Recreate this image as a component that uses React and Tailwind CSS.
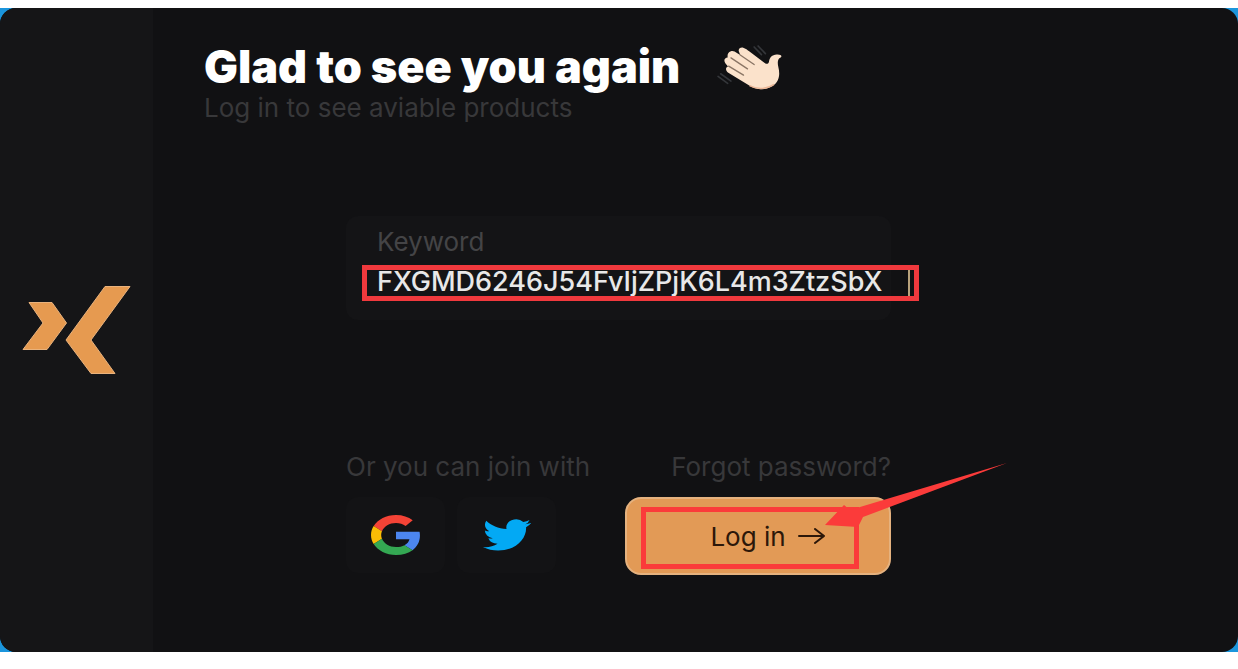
import React, { useState } from 'react';

const Logo = () => (
  <svg className="w-[109px] h-[88px]" viewBox="23 286 109 88" fill="#e69a50" stroke="#e9b27c" strokeWidth="1" aria-label="Logo" role="img">
    <path d="M30 302.5H53L67.5 323L48 349.5H24L44 323Z" />
    <path d="M106 286.5H131L92 340L116 373.5H92L67 340Z" />
  </svg>
);

const WavingHand = () => (
  <svg className="w-[67px] h-[47px] shrink-0" viewBox="650 45 200 142" aria-hidden="true">
    <path
      d="M694 67C700 65 706 68 712 72L722 78L718 68C715 60 722 54 731 56C738 58 744 63 750 68L798 104C804 107 808 103 809 98C811 86 818 78 832 77C844 76 850 81 844 86C835 90 834 100 837 114C843 138 840 158 820 172C798 186 770 185 748 170L686 132C678 127 676 116 685 113L677 103C671 95 675 86 684 86C683 78 684 70 694 67Z"
      fill="#fbe2cb"
    />
    <path d="M722 78L764 107M694 87L744 120M687 112L732 139" fill="none" stroke="#8a7565" strokeWidth="4" strokeLinecap="round" />
    <path d="M750 171C776 185 806 180 824 167" fill="none" stroke="#eab595" strokeWidth="4" />
    <path d="M764 54L786 77M776 51L798 74M655 143L684 164M663 135L694 157" fill="none" stroke="#34363a" strokeWidth="5" strokeLinecap="round" />
  </svg>
);

const GoogleIcon = () => (
  <svg className="w-[50px] h-10" viewBox="0 0 48 48" preserveAspectRatio="none" aria-hidden="true">
    <path fill="#f44336" d="M24 9.5c3.54 0 6.71 1.22 9.21 3.6l6.85-6.85C35.9 2.38 30.47 0 24 0 14.62 0 6.51 5.38 2.56 13.22l7.98 6.19C12.43 13.72 17.74 9.5 24 9.5z" />
    <path fill="#4c86f0" d="M46.98 24.55c0-1.57-.15-3.09-.38-4.55H24v9.02h12.94c-.58 2.96-2.26 5.48-4.78 7.18l7.73 6c4.51-4.18 7.09-10.36 7.09-17.65z" />
    <path fill="#fbbc05" d="M10.53 28.59c-.48-1.45-.76-2.99-.76-4.59s.27-3.14.76-4.59l-7.98-6.19C.92 16.46 0 20.12 0 24c0 3.88.92 7.54 2.56 10.78l7.97-6.19z" />
    <path fill="#34a853" d="M24 48c6.48 0 11.93-2.13 15.89-5.81l-7.73-6c-2.15 1.45-4.92 2.3-8.16 2.3-6.26 0-11.57-4.22-13.47-9.91l-7.98 6.19C6.51 42.62 14.62 48 24 48z" />
  </svg>
);

const TwitterIcon = () => (
  <svg className="w-12 h-8" viewBox="0 2 24 20" preserveAspectRatio="none" fill="#03a9f4" aria-hidden="true">
    <path d="M23.953 4.57a10 10 0 01-2.825.775 4.958 4.958 0 002.163-2.723c-.951.555-2.005.959-3.127 1.184a4.92 4.92 0 00-8.384 4.482C7.69 8.095 4.067 6.13 1.64 3.162a4.822 4.822 0 00-.666 2.475c0 1.71.87 3.213 2.188 4.096a4.904 4.904 0 01-2.228-.616v.06a4.923 4.923 0 003.946 4.827 4.996 4.996 0 01-2.212.085 4.936 4.936 0 004.604 3.417 9.867 9.867 0 01-6.102 2.105c-.39 0-.779-.023-1.17-.067a13.995 13.995 0 007.557 2.209c9.053 0 13.998-7.496 13.998-13.985 0-.21 0-.42-.015-.63A9.935 9.935 0 0024 4.59z" />
  </svg>
);

const App = () => {
  const [keyword, setKeyword] = useState('FXGMD6246J54FvIjZPjK6L4m3ZtzSbX');

  return (
    <div className="min-h-screen flex flex-col bg-white pt-2 pb-[17px] font-['Inter',sans-serif]">
      <div className="flex-1 flex bg-[#1b95dc]">
        <div className="flex-1 flex rounded-2xl overflow-hidden bg-[#111113]">
          <aside className="w-[153px] shrink-0 bg-[#151517] flex items-center justify-center">
            <Logo />
          </aside>

          <main className="flex-1 pl-[51px] pt-[35px]">
            <div className="flex items-center gap-9">
              <h1 className="text-[45px] leading-[48px] font-black text-white whitespace-nowrap">Glad to see you again</h1>
              <WavingHand />
            </div>
            <p className="text-[26px] leading-[34px] text-[#38383a]">Log in to see aviable products</p>

            <form className="ml-[142px] mt-[91px] w-full max-w-[545px]" onSubmit={(e) => e.preventDefault()}>
              {/* Keyword field */}
              <div className="relative rounded-xl bg-[#141416] px-[31px] pt-3 pb-5">
                <label htmlFor="keyword" className="block text-[26px] leading-7 text-[#444446]">Keyword</label>
                <div className="-mr-7">
                  <input
                    id="keyword"
                    type="text"
                    value={keyword}
                    onChange={(e) => setKeyword(e.target.value)}
                    className="block w-full mt-2 h-9 bg-transparent text-[27px] font-medium text-[#e8e8e8] outline-none"
                  />
                </div>
                <span className="absolute left-4 -right-7 top-[49px] h-9 border-[5px] border-[#f0393d] pointer-events-none">
                  <span className="absolute right-1 inset-y-0 w-0.5 bg-[#b9a27c]"></span>
                </span>
              </div>

              <div className="mt-[133px] flex justify-between">
                <div>
                  <p className="text-[26px] leading-7 text-[#38383a]">Or you can join with</p>
                  <div className="mt-4 flex gap-3">
                    <button type="button" aria-label="Google" className="w-[99px] h-[76px] rounded-xl bg-[#131315] flex items-center justify-center">
                      <GoogleIcon />
                    </button>
                    <button type="button" aria-label="Twitter" className="w-[99px] h-[76px] rounded-xl bg-[#131315] flex items-center justify-center">
                      <TwitterIcon />
                    </button>
                  </div>
                </div>

                <div className="w-[266px]">
                  <a href="#forgot" className="block text-right text-[26px] leading-7 text-[#38383a]">Forgot password?</a>
                  <button
                    type="submit"
                    className="relative mt-4 w-full h-[78px] rounded-2xl border-2 border-[#e5b27f] bg-[#e29a56] flex items-center justify-center gap-3 pl-5 text-[26px] text-[#2c1709]"
                  >
                    Log in
                    <svg className="w-7 h-4" viewBox="0 0 28 16" fill="none" stroke="currentColor" strokeWidth="2" strokeLinecap="round" strokeLinejoin="round" aria-hidden="true">
                      <path d="M1 8H26M17 1L26 8L17 15" />
                    </svg>
                    <span className="absolute left-3.5 right-[30px] top-2 bottom-1 border-[5px] border-[#fb3b3a]"></span>
                    <svg className="absolute left-[198px] -top-9 w-[183px] h-[64px] pointer-events-none" viewBox="0 0 183 64" fill="#fb3b3a" aria-hidden="true">
                      <path d="M0 62L19 42L25 47L182 0L38 54L33 64Z" />
                    </svg>
                  </button>
                </div>
              </div>
            </form>
          </main>
        </div>
      </div>
    </div>
  );
};

export default App;
